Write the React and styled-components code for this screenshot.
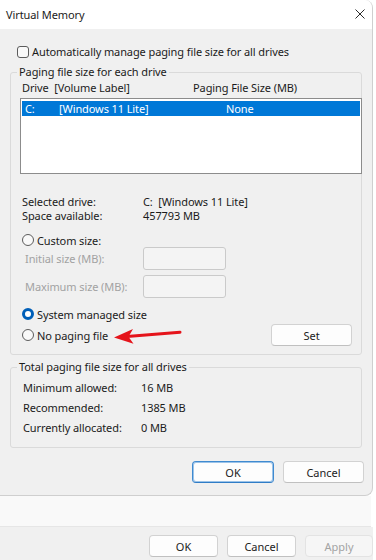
import styled, { createGlobalStyle } from 'styled-components';

const GlobalStyle = createGlobalStyle`
  html, body {
    margin: 0;
    padding: 0;
    background: #ffffff;
  }
  body {
    font-family: "Noto Sans", "Open Sans", sans-serif;
    font-size: 11px;
    letter-spacing: -0.1px;
    color: #1b1b1b;
  }
`;

const drives = [
  { letter: 'C:', label: '[Windows 11 Lite]', size: 'None', selected: true },
];

const totals = [
  { label: 'Minimum allowed:', value: '16 MB' },
  { label: 'Recommended:', value: '1385 MB' },
  { label: 'Currently allocated:', value: '0 MB' },
];

function Arrow() {
  return (
    <ArrowSvg width="68" height="16" viewBox="0 0 68 16">
      <line x1="13" y1="8.6" x2="66" y2="4.2" stroke="#e5141b" strokeWidth="3" strokeLinecap="round" />
      <polygon points="0,9.5 19,1 14.5,8.7 19.5,15.8" fill="#e5141b" />
    </ArrowSvg>
  );
}

export default function App() {
  return (
    <>
      <GlobalStyle />
      <Page>
        <Dialog>
          <TitleBar>
            <Title>Virtual Memory</Title>
            <CloseIcon width="10" height="10" viewBox="0 0 10 10">
              <path d="M0.5 0.5 L9.5 9.5 M9.5 0.5 L0.5 9.5" stroke="#2b2b2b" strokeWidth="1" />
            </CloseIcon>
          </TitleBar>

          <Body>
            <CheckRow>
              <Checkbox />
              Automatically manage paging file size for all drives
            </CheckRow>

            <Group $top={14}>
              <GroupTitle>Paging file size for each drive</GroupTitle>
              <ListHeader>
                <span>Drive  [Volume Label]</span>
                <span>Paging File Size (MB)</span>
              </ListHeader>
              <DriveList>
                {drives.map((d) => (
                  <DriveRow key={d.letter} $selected={d.selected}>
                    <span>{d.letter}</span>
                    <span>{d.label}</span>
                    <span>{d.size}</span>
                  </DriveRow>
                ))}
              </DriveList>

              <InfoBlock>
                <InfoRow>
                  <span>Selected drive:</span>
                  <span>C:  [Windows 11 Lite]</span>
                </InfoRow>
                <InfoRow>
                  <span>Space available:</span>
                  <span>457793 MB</span>
                </InfoRow>
              </InfoBlock>

              <RadioRow $top={10}>
                <Radio />
                Custom size:
              </RadioRow>
              <SizeRow>
                <DisabledLabel>Initial size (MB):</DisabledLabel>
                <SizeInput />
              </SizeRow>
              <SizeRow $top={5}>
                <DisabledLabel>Maximum size (MB):</DisabledLabel>
                <SizeInput />
              </SizeRow>

              <RadioRow $top={9}>
                <Radio $checked />
                System managed size
              </RadioRow>
              <SetRow>
                <RadioRow>
                  <Radio />
                  No paging file
                  <Arrow />
                </RadioRow>
                <Button $w={81}>Set</Button>
              </SetRow>
            </Group>

            <Group $top={12} $bottom={9}>
              <GroupTitle>Total paging file size for all drives</GroupTitle>
              <TotalsList>
                {totals.map((t) => (
                  <TotalRow key={t.label}>
                    <span>{t.label}</span>
                    <span>{t.value}</span>
                  </TotalRow>
                ))}
              </TotalsList>
            </Group>

            <DialogButtons>
              <Button $w={82} $primary>OK</Button>
              <Button $w={81}>Cancel</Button>
            </DialogButtons>
          </Body>
        </Dialog>

        <ParentStrip />
        <ParentBar>
          <Button $w={69}>OK</Button>
          <Button $w={69}>Cancel</Button>
          <Button $w={68} disabled>Apply</Button>
        </ParentBar>
      </Page>
    </>
  );
}

const Page = styled.div`
  width: 376px;
  height: 560px;
  overflow: hidden;
  display: flex;
  flex-direction: column;
`;

const Dialog = styled.div`
  width: 373px;
  height: 496px;
  box-sizing: border-box;
  display: flex;
  flex-direction: column;
  background: #f0f0f0;
  border-right: 1px solid #cfcfcf;
  border-bottom: 1px solid #cfcfcf;
  border-radius: 0 8px 8px 0;
  overflow: hidden;
`;

const TitleBar = styled.div`
  height: 29px;
  flex: none;
  display: flex;
  align-items: center;
  justify-content: space-between;
  padding: 0 7px 0 6px;
  background: #ffffff;
`;

const Title = styled.span`
  font-size: 11px;
  line-height: 16px;
  color: #1b1b1b;
`;

const CloseIcon = styled.svg`
  display: block;
  margin-top: -1px;
`;

const Body = styled.div`
  flex: 1;
  padding: 16px 10px 0 10px;
`;

const CheckRow = styled.label`
  display: flex;
  align-items: center;
  gap: 3px;
  height: 13px;
  padding-left: 7px;
`;

const Checkbox = styled.span`
  width: 12px;
  height: 12px;
  box-sizing: border-box;
  border: 1px solid #5c5c5c;
  border-radius: 3px;
  background: #f9f9f9;
`;

const Group = styled.div`
  margin-top: ${(p) => p.$top || 0}px;
  width: 352px;
  box-sizing: border-box;
  border: 1px solid #dadada;
  border-radius: 3px;
  padding: 0 9px ${(p) => (p.$bottom ?? 8)}px 9px;
`;

const GroupTitle = styled.div`
  width: fit-content;
  margin: -9px 0 0 -3px;
  padding: 0 2px;
  line-height: 16px;
  background: #f0f0f0;
`;

const ListHeader = styled.div`
  display: grid;
  grid-template-columns: 171px auto;
  height: 16px;
  line-height: 16px;
  padding-left: 2px;
  white-space: pre;
`;

const DriveList = styled.div`
  margin-top: 2px;
  width: 342px;
  height: 76px;
  box-sizing: border-box;
  border: 1px solid #8c8c8c;
  background: #ffffff;
  padding: 2px 1px;
`;

const DriveRow = styled.div`
  display: grid;
  grid-template-columns: 34px 167px auto;
  height: 15px;
  line-height: 15px;
  padding-left: 3px;
  background: ${(p) => (p.$selected ? '#0078d7' : 'transparent')};
  color: ${(p) => (p.$selected ? '#ffffff' : '#1b1b1b')};
`;

const InfoBlock = styled.div`
  margin-top: 21px;
`;

const InfoRow = styled.div`
  display: grid;
  grid-template-columns: 121px auto;
  height: 14px;
  line-height: 14px;
  padding-left: 2px;
  white-space: pre;
`;

const RadioRow = styled.label`
  display: flex;
  align-items: center;
  gap: 3px;
  height: 14px;
  margin-top: ${(p) => p.$top || 0}px;
  padding-left: 2px;
`;

const Radio = styled.span`
  width: 12px;
  height: 12px;
  box-sizing: border-box;
  border-radius: 50%;
  border: ${(p) => (p.$checked ? '3.5px solid #005fb8' : '1px solid #5c5c5c')};
  background: ${(p) => (p.$checked ? '#ffffff' : '#f9f9f9')};
`;

const ArrowSvg = styled.svg`
  display: block;
  margin-left: 3px;
  margin-top: 1px;
`;

const SizeRow = styled.div`
  display: grid;
  grid-template-columns: 118px 83px;
  align-items: center;
  height: 23px;
  margin-top: ${(p) => p.$top || 0}px;
  padding-left: 5px;
`;

const DisabledLabel = styled.span`
  color: #a2a2a2;
`;

const SizeInput = styled.div`
  height: 23px;
  box-sizing: border-box;
  border: 1px solid #cacaca;
  border-radius: 3px;
  background: #f4f4f4;
`;

const SetRow = styled.div`
  display: flex;
  align-items: center;
  justify-content: space-between;
  height: 22px;
  margin-top: 3px;
`;

const Button = styled.button`
  width: ${(p) => p.$w}px;
  height: 22px;
  box-sizing: border-box;
  padding: 0;
  font-family: inherit;
  font-size: 11px;
  color: #1b1b1b;
  background: #fdfdfd;
  border: 1px solid ${(p) => (p.$primary ? '#3f8ad0' : '#d2d2d2')};
  border-bottom-color: ${(p) => (p.$primary ? '#2f7cc6' : '#c0c0c0')};
  box-shadow: ${(p) => (p.$primary ? 'inset 0 0 0 1px #9cc3e8' : 'none')};
  border-radius: 4px;

  &:disabled {
    color: #a3a3a3;
    background: #f6f6f6;
    border-color: #e3e3e3;
  }
`;

const TotalsList = styled.div`
  margin-top: 3px;
`;

const TotalRow = styled.div`
  display: grid;
  grid-template-columns: 118px auto;
  height: 20px;
  line-height: 20px;
  padding-left: 3px;
`;

const DialogButtons = styled.div`
  display: flex;
  justify-content: flex-end;
  gap: 9px;
  margin-top: 13px;
  margin-right: -2px;
`;

const ParentStrip = styled.div`
  width: 371px;
  height: 30px;
  flex: none;
  background: #f9f9f9;
  border-bottom: 1px solid #e6e6e6;
`;

const ParentBar = styled.div`
  flex: 1;
  width: 373px;
  display: flex;
  justify-content: flex-end;
  gap: 9px;
  padding-top: 8px;
  background: #f0f0f0;
`;
